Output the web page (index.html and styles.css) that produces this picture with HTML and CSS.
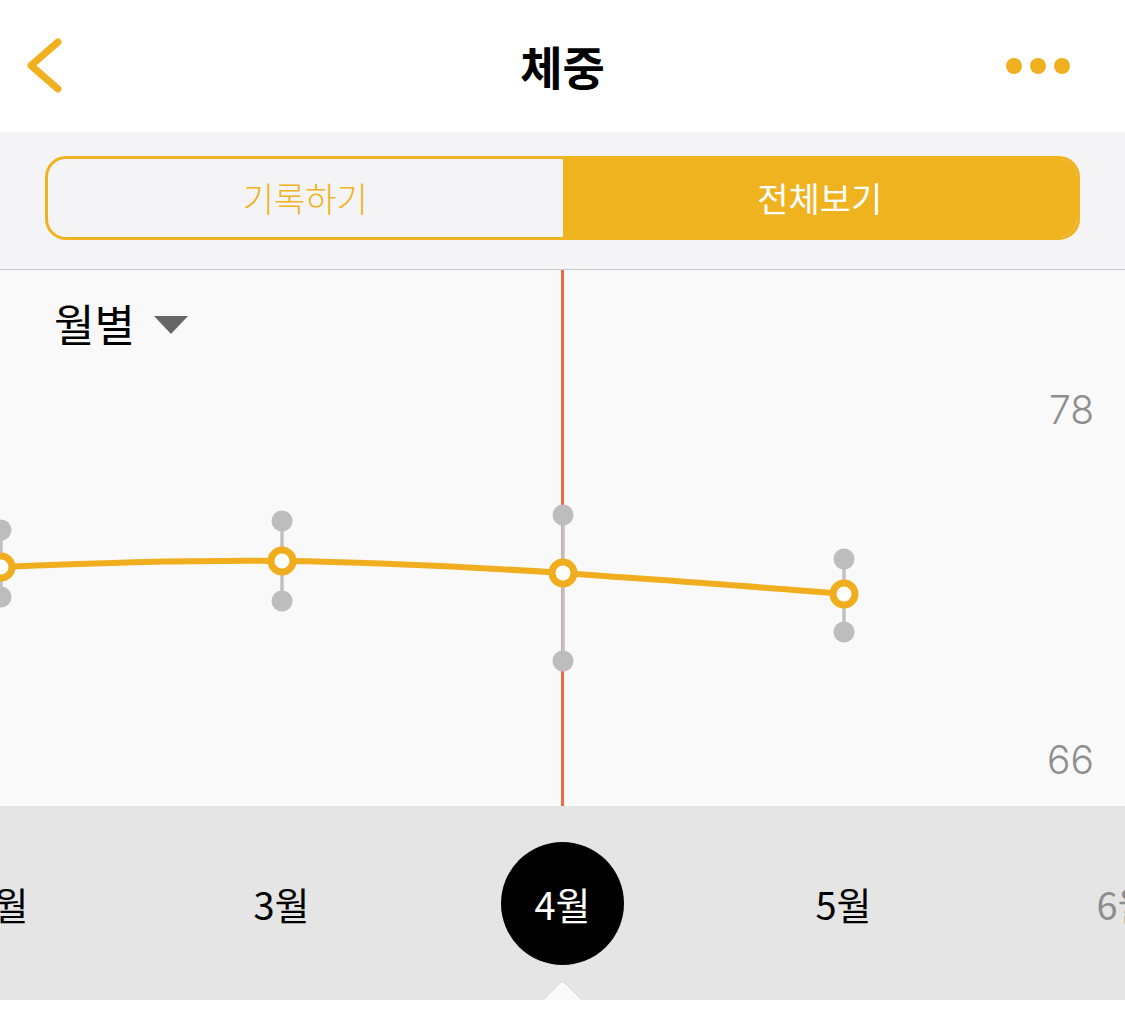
FILE: index.html
```html
<!DOCTYPE html>
<html lang="ko">
<head>
    <meta charset="UTF-8">
    <meta name="viewport" content="width=device-width, initial-scale=1.0">
    <title>체중</title>
    <link rel="stylesheet" href="styles.css">
</head>
<body>
    <div class="screen">
        <div class="nav">
            <div class="nav-left">
                <svg class="back" width="44" height="60" viewBox="0 0 44 60">
                    <path d="M38 6 L11 29.5 L38 53" fill="none" stroke="#efb11f" stroke-width="7" stroke-linecap="round" stroke-linejoin="round"/>
                </svg>
            </div>
            <h1>체중</h1>
            <div class="nav-right">
                <span class="dot"></span><span class="dot"></span><span class="dot"></span>
            </div>
        </div>

        <div class="segment-wrap">
            <div class="segment">
                <div class="seg">기록하기</div>
                <div class="seg active">전체보기</div>
            </div>
        </div>

        <div class="chart">
            <svg class="plot" width="1125" height="536" viewBox="0 0 1125 536">
                <line x1="562.5" y1="0" x2="562.5" y2="536" stroke="#ec6a40" stroke-width="3"/>
                <g stroke="#c0c0c0" stroke-width="3.5">
                    <line x1="1" y1="260" x2="1" y2="327"/>
                    <line x1="282" y1="251" x2="282" y2="331"/>
                    <line x1="563" y1="245" x2="563" y2="391"/>
                    <line x1="844" y1="289" x2="844" y2="362"/>
                </g>
                <g fill="#bdbdbd">
                    <circle cx="1" cy="260" r="10.5"/>
                    <circle cx="1" cy="327" r="10.5"/>
                    <circle cx="282" cy="251" r="10.5"/>
                    <circle cx="282" cy="331" r="10.5"/>
                    <circle cx="563" cy="245" r="10.5"/>
                    <circle cx="563" cy="391" r="10.5"/>
                    <circle cx="844" cy="289" r="10.5"/>
                    <circle cx="844" cy="362" r="10.5"/>
                </g>
                <path d="M1 297 C 95 293, 190 290, 282 291 C 375 292, 470 297, 563 303 C 657 310, 750 316, 844 324" fill="none" stroke="#f0ae1e" stroke-width="6"/>
                <g fill="#ffffff" stroke="#f0ae1e" stroke-width="7">
                    <circle cx="1" cy="297" r="11"/>
                    <circle cx="282" cy="291" r="11"/>
                    <circle cx="563" cy="303" r="11"/>
                    <circle cx="844" cy="324" r="11"/>
                </g>
            </svg>

            <div class="period">
                <span>월별</span>
                <span class="caret"></span>
            </div>

            <div class="axis-label top">78</div>
            <div class="axis-label bottom">66</div>
        </div>

        <div class="months">
            <div class="month-row">
                <div class="month">2월</div>
                <div class="month">3월</div>
                <div class="month"><span class="current">4월</span></div>
                <div class="month">5월</div>
                <div class="month future">6월</div>
            </div>
            <svg class="pointer" width="41" height="19" viewBox="0 0 41 19">
                <path d="M1 19 L18 2 Q20.5 -0.5 23 2 L40 19" fill="#f9f9f9" stroke="#d6d6d6" stroke-width="1"/>
            </svg>
        </div>
    </div>
</body>
</html>
```

FILE: styles.css
```css
body {
    margin: 0;
    padding: 0;
    background: #ffffff;
    font-family: Inter, "Noto Sans CJK KR", sans-serif;
    color: #000000;
}

.screen {
    width: 1125px;
    overflow: hidden;
}

.nav {
    height: 132px;
    display: grid;
    grid-template-columns: 1fr auto 1fr;
    align-items: center;
    background: #ffffff;
}

.nav-left {
    padding-left: 20px;
    display: flex;
    align-items: center;
}

.back {
    display: block;
}

.nav h1 {
    margin: 0;
    font-family: "Noto Sans CJK KR", sans-serif;
    font-size: 46px;
    font-weight: 700;
    line-height: 1;
    padding-bottom: 2px;
}

.nav-right {
    display: flex;
    justify-content: flex-end;
    gap: 8px;
    padding-right: 55px;
}

.dot {
    width: 16px;
    height: 16px;
    border-radius: 50%;
    background: #efb11f;
}

.segment-wrap {
    background: #f4f4f6;
    padding: 24px 45px 29px;
    border-bottom: 1px solid #c8c7cc;
}

.segment {
    display: flex;
    height: 78px;
    border: 3px solid #efb320;
    border-radius: 21px;
    overflow: hidden;
}

.seg {
    flex: 1;
    display: flex;
    align-items: center;
    justify-content: center;
    font-family: "Noto Sans CJK KR", sans-serif;
    font-size: 34px;
    font-weight: 300;
    color: #efb320;
    padding-bottom: 2px;
}

.seg.active {
    background: #efb320;
    color: #ffffff;
    font-weight: 400;
}

.chart {
    position: relative;
    height: 536px;
    background: #f9f9f9;
}

.plot {
    position: absolute;
    left: 0;
    top: 0;
}

.period {
    position: relative;
    display: inline-flex;
    align-items: center;
    gap: 19px;
    margin: 31px 0 0 54px;
    font-family: "Noto Sans CJK KR", sans-serif;
    font-size: 44px;
    line-height: 1;
}

.caret {
    width: 0;
    height: 0;
    border-left: 17.5px solid transparent;
    border-right: 17.5px solid transparent;
    border-top: 18px solid #666666;
    margin-top: 4px;
}

.axis-label {
    position: absolute;
    right: 31px;
    font-size: 39px;
    font-weight: 300;
    line-height: 1;
    color: #8e8e8e;
}

.axis-label.top {
    top: 120px;
}

.axis-label.bottom {
    top: 470px;
}

.months {
    position: relative;
    height: 194px;
    background: #e5e5e5;
}

.month-row {
    display: flex;
    height: 100%;
    margin-left: -140px;
}

.month {
    flex: 0 0 281px;
    display: flex;
    align-items: center;
    justify-content: center;
    font-family: "Noto Sans CJK KR", sans-serif;
    font-size: 38px;
    color: #000000;
}

.month.future {
    color: #8e8e8e;
}

.current {
    width: 123px;
    height: 123px;
    border-radius: 50%;
    background: #000000;
    color: #ffffff;
    display: flex;
    align-items: center;
    justify-content: center;
}

.pointer {
    position: absolute;
    left: 542px;
    bottom: 0;
    display: block;
}
```
